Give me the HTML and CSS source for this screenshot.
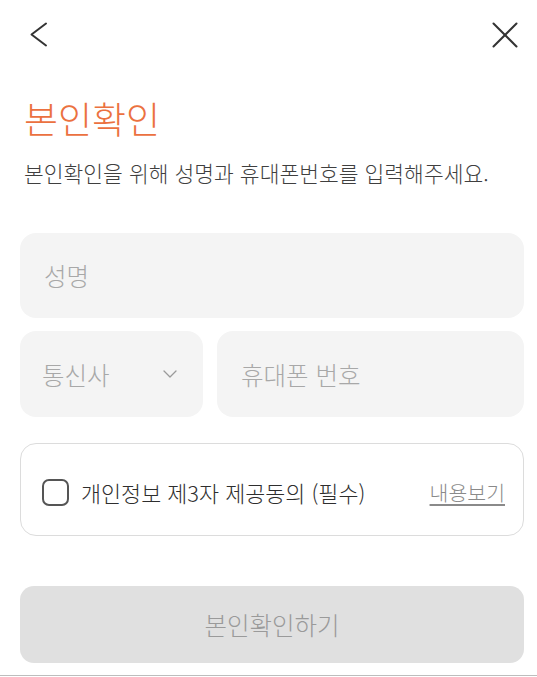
FILE: index.html
```html
<!DOCTYPE html>
<html lang="ko">
<head>
<meta charset="utf-8">
<title>본인확인</title>
<link rel="stylesheet" href="styles.css">
</head>
<body>
<div class="page">
  <header class="topbar">
    <svg class="icon-back" width="18" height="26" viewBox="0 0 18 26">
      <polyline points="16,1.5 1.5,12.5 16,23.5" fill="none" stroke="#333" stroke-width="2" stroke-linecap="round" stroke-linejoin="round"/>
    </svg>
    <svg class="icon-close" width="26" height="26" viewBox="0 0 26 26">
      <line x1="1.5" y1="1.5" x2="24.5" y2="24.5" stroke="#333" stroke-width="2" stroke-linecap="round"/>
      <line x1="24.5" y1="1.5" x2="1.5" y2="24.5" stroke="#333" stroke-width="2" stroke-linecap="round"/>
    </svg>
  </header>

  <div class="intro">
    <h1 class="title">본인확인</h1>
    <p class="subtitle">본인확인을 위해 성명과 휴대폰번호를 입력해주세요.</p>
  </div>

  <div class="field field-name"><span class="placeholder">성명</span></div>

  <div class="row">
    <div class="field field-carrier">
      <span class="placeholder">통신사</span>
      <svg class="chev" width="14" height="8" viewBox="0 0 14 8">
        <polyline points="1,1 7,7 13,1" fill="none" stroke="#9a9a9a" stroke-width="1.3" stroke-linecap="round" stroke-linejoin="round"/>
      </svg>
    </div>
    <div class="field field-phone"><span class="placeholder">휴대폰 번호</span></div>
  </div>

  <div class="agree">
    <span class="checkbox"></span>
    <span class="agree-text">개인정보 제3자 제공동의 (필수)</span>
    <a class="agree-link">내용보기</a>
  </div>

  <div class="submit">본인확인하기</div>
</div>
<div class="bottom-line"></div>
</body>
</html>
```

FILE: styles.css
```css
* { box-sizing: border-box; }
html, body {
  margin: 0;
  padding: 0;
  background: #ffffff;
}
body {
  font-family: "Noto Sans CJK KR", "Noto Sans", sans-serif;
  font-weight: 300;
  color: #333;
  width: 537px;
  height: 677px;
  overflow: hidden;
  display: flex;
  flex-direction: column;
}
.page {
  padding: 0 13px 0 20px;
  display: flex;
  flex-direction: column;
}
.topbar {
  height: 69px;
  display: flex;
  align-items: center;
  justify-content: space-between;
}
.icon-back { margin-left: 10px; display: block; }
.icon-close { margin-right: 6px; display: block; }

.intro { padding-left: 4px; }
.title {
  margin: 29px 0 0;
  font-size: 37px;
  line-height: 41px;
  font-weight: 300;
  color: #eb7140;
}
.subtitle {
  margin: 20px 0 0;
  font-size: 21.5px;
  line-height: 28px;
  color: #3f3f3f;
}

.field {
  background: #f4f4f4;
  border-radius: 16px;
  display: flex;
  align-items: center;
}
.placeholder {
  font-size: 24.5px;
  color: #a8a8a8;
}
.field-name {
  margin-top: 46px;
  height: 85px;
  padding-left: 24px;
}
.row {
  margin-top: 13px;
  display: grid;
  grid-template-columns: 183px 1fr;
  gap: 14px;
  height: 86px;
}
.field-carrier {
  padding: 0 26px 0 22px;
  justify-content: space-between;
}
.chev { display: block; }
.field-phone { padding-left: 24px; }

.agree {
  margin-top: 26px;
  height: 93px;
  border: 1px solid #dcdcdc;
  border-radius: 16px;
  display: flex;
  align-items: center;
  padding: 5px 18px 0 21px;
}
.checkbox {
  width: 27px;
  height: 27px;
  border: 2.5px solid #555;
  border-radius: 7px;
  flex: none;
}
.agree-text {
  margin-left: 12px;
  font-size: 21.8px;
  color: #2e2e2e;
  flex: 1;
}
.agree-link {
  font-size: 20.5px;
  color: #8a8a8a;
  text-decoration: underline;
  text-underline-offset: 3px;
}

.submit {
  margin-top: 50px;
  height: 77px;
  border-radius: 14px;
  background: #e0e0e0;
  color: #9a9a9a;
  font-size: 24.5px;
  display: flex;
  align-items: center;
  justify-content: center;
}
.bottom-line {
  margin-top: 12px;
  border-top: 1px solid #bdbdbd;
  width: 100%;
}
```
